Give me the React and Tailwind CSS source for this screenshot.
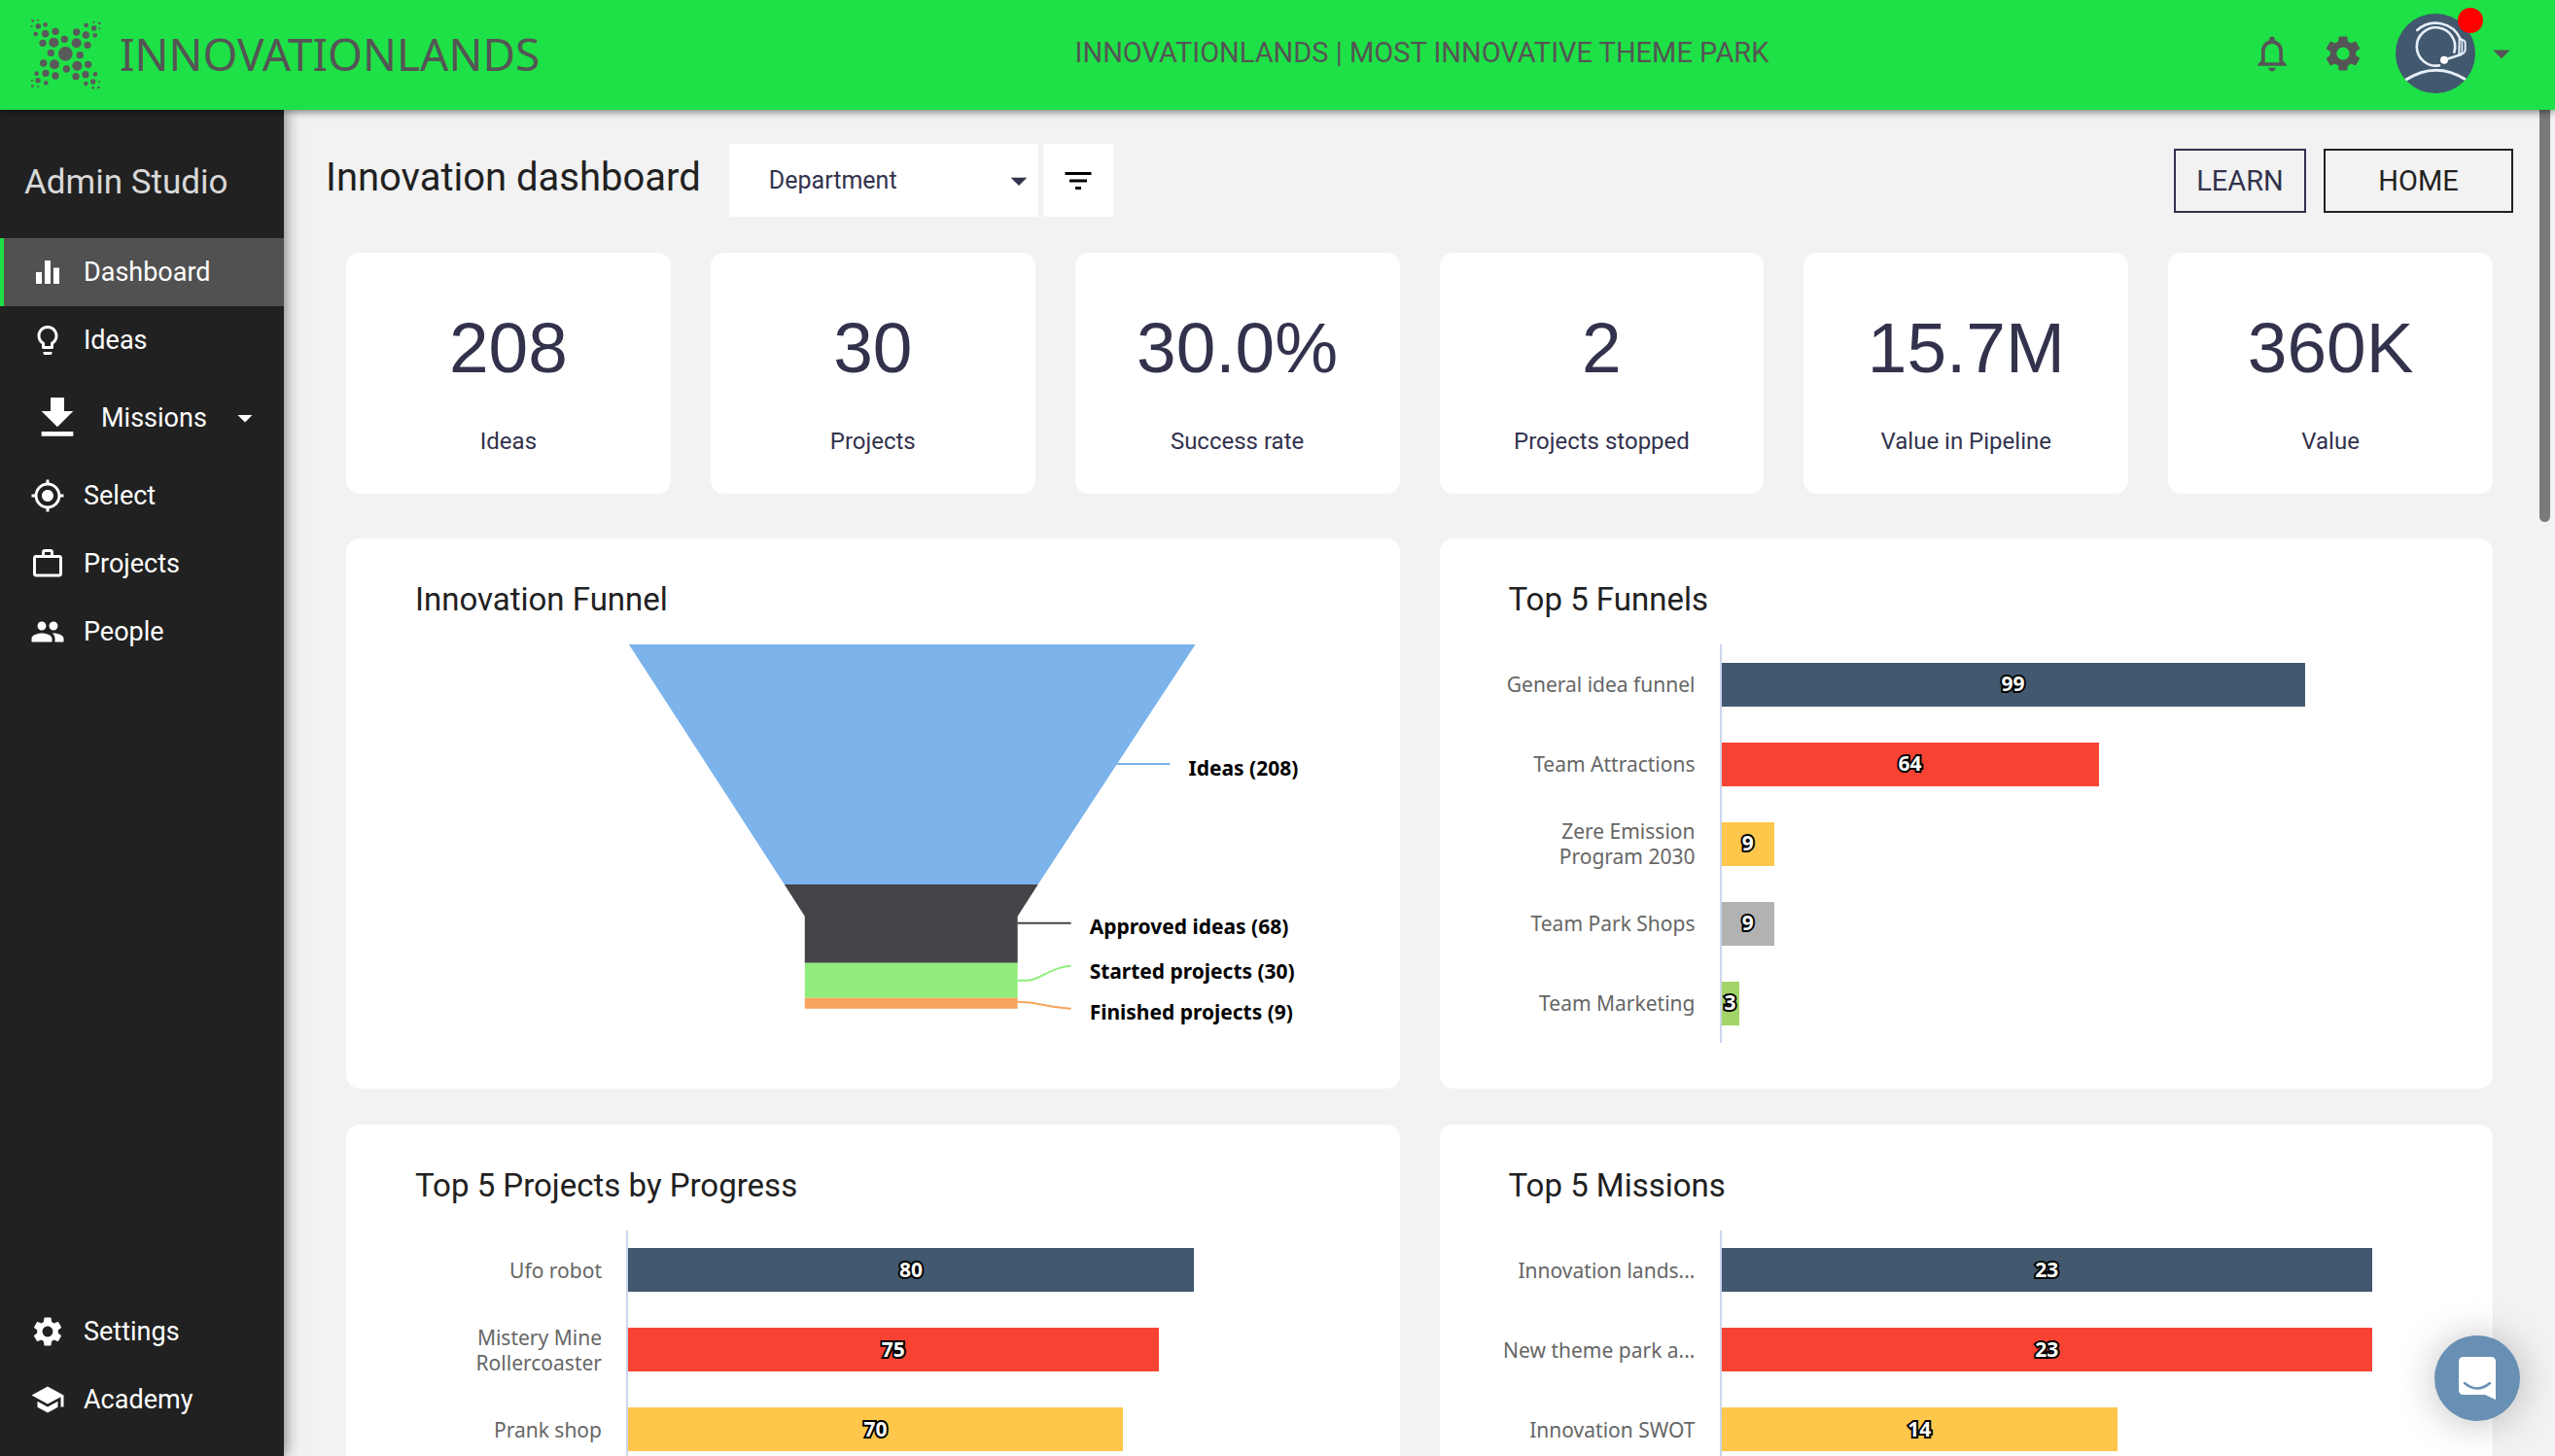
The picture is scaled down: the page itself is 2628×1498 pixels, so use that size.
import { useState } from "react";
import {
  MdArrowDropDown,
  MdEqualizer,
  MdFileDownload,
  MdFilterList,
  MdLightbulbOutline,
  MdMyLocation,
  MdNotificationsNone,
  MdPeople,
  MdSchool,
  MdSettings,
  MdWorkOutline,
} from "react-icons/md";

const mainLinks = [
  { label: "Dashboard", icon: MdEqualizer },
  { label: "Ideas", icon: MdLightbulbOutline },
  { label: "Missions", icon: MdFileDownload, expandable: true },
  { label: "Select", icon: MdMyLocation },
  { label: "Projects", icon: MdWorkOutline },
  { label: "People", icon: MdPeople },
];

const bottomLinks = [
  { label: "Settings", icon: MdSettings },
  { label: "Academy", icon: MdSchool },
];

const stats = [
  { value: "208", label: "Ideas" },
  { value: "30", label: "Projects" },
  { value: "30.0%", label: "Success rate" },
  { value: "2", label: "Projects stopped" },
  { value: "15.7M", label: "Value in Pipeline" },
  { value: "360K", label: "Value" },
];

const topFunnels = [
  { label: "General idea funnel", value: 99, color: "bg-[#41586f]" },
  { label: "Team Attractions", value: 64, color: "bg-[#f84333]" },
  { label: "Zere Emission Program 2030", value: 9, color: "bg-[#fec64a]" },
  { label: "Team Park Shops", value: 9, color: "bg-[#b2b2b2]" },
  { label: "Team Marketing", value: 3, color: "bg-[#a3d467]" },
];

const topProjects = [
  { label: "Ufo robot", value: 80, color: "bg-[#41586f]" },
  { label: "Mistery Mine Rollercoaster", value: 75, color: "bg-[#f84333]" },
  { label: "Prank shop", value: 70, color: "bg-[#fec64a]" },
];

const topMissions = [
  { label: "Innovation lands...", value: 23, color: "bg-[#41586f]" },
  { label: "New theme park a...", value: 23, color: "bg-[#f84333]" },
  { label: "Innovation SWOT", value: 14, color: "bg-[#fec64a]" },
];

// x, y, radius
const logoDots = [
  [142, 136, 22],
  [106, 101, 15], [176, 103, 15], [108, 169, 15], [178, 173, 15],
  [139, 91, 11], [97, 133, 11], [187, 140, 11], [145, 183, 11],
  [111, 67, 11], [176, 69, 11], [72, 103, 11], [210, 109, 11],
  [74, 165, 11], [212, 169, 11], [111, 204, 11], [174, 206, 11],
  [80, 74, 11], [205, 78, 11], [81, 196, 11], [204, 200, 11],
  [80, 46, 7], [50, 75, 7], [58, 51, 8], [206, 48, 7], [230, 57, 8], [233, 79, 7],
  [53, 197, 7], [57, 218, 8], [82, 226, 7], [234, 199, 7], [227, 222, 8], [205, 228, 7],
  [41, 34, 4], [57, 32, 3], [38, 52, 3], [229, 39, 3], [247, 42, 4], [247, 58, 3],
  [39, 218, 3], [40, 236, 4], [58, 237, 3], [246, 222, 3], [244, 240, 4], [227, 241, 4],
];

function Logo() {
  return (
    <svg viewBox="30 24 225 225" className="size-[75px] shrink-0 fill-[#5a5a5a]" aria-hidden="true">
      {logoDots.map(([x, y, r]) => (
        <circle key={`${x}-${y}`} cx={x} cy={y} r={r} />
      ))}
    </svg>
  );
}

function Avatar() {
  return (
    <svg viewBox="492 44 246 246" className="size-[82px]" aria-hidden="true">
      <circle cx="615" cy="167" r="123" fill="#41586f" />
      <g fill="none" stroke="#e6eef8" strokeWidth="8">
        <path d="M673 163 A59 59 0 1 0 627 204" strokeLinecap="round" />
        <path d="M559 95 A84 84 0 0 1 692 122" strokeLinecap="round" />
        <path d="M689 122 L702 126 L707 132 V158 L702 166 L688 170 Z" strokeWidth="6" strokeLinejoin="round" />
        <path d="M697 124 V166" strokeWidth="5" />
        <path d="M642 187 L697 169" />
        <path d="M523 249 Q615 189 708 247" strokeWidth="9" />
      </g>
      <circle cx="642" cy="187" r="12" fill="#fff" />
    </svg>
  );
}

function Header() {
  return (
    <header className="relative z-20 flex h-[113px] shrink-0 items-center bg-[#1de146] pb-[3px] pl-[30px] pr-[34px] text-[#555] shadow-[0_2px_8px_rgba(0,0,0,0.5)]">
      <a href="#" className="flex w-[580px] items-center gap-[18px]">
        <Logo />
        <span className="font-['Noto_Sans',sans-serif] text-[46px] leading-none">INNOVATIONLANDS</span>
      </a>
      <p className="flex-1 text-center text-[29px]">INNOVATIONLANDS | MOST INNOVATIVE THEME PARK</p>
      <div className="flex items-center">
        <button aria-label="Notifications" className="mr-[29px]">
          <MdNotificationsNone className="size-[44px]" />
        </button>
        <button aria-label="Settings" className="mr-8">
          <MdSettings className="size-[44px]" />
        </button>
        <button aria-label="Account" className="relative flex items-center gap-[6px]">
          <Avatar />
          <span className="absolute -top-1.5 left-[64px] size-[26px] rounded-full bg-[#ff0000]" />
          <MdArrowDropDown className="size-[42px]" />
        </button>
      </div>
    </header>
  );
}

function NavItem({ item, active, onSelect }) {
  const Icon = item.icon;
  return (
    <a
      href="#"
      onClick={onSelect}
      className={`flex items-center border-l-4 pl-[27px] text-[27px] ${
        active ? "border-[#1de146] bg-[#515151]" : "border-transparent"
      } ${item.expandable ? "h-[90px] gap-[17px]" : "h-[70px] gap-[19px]"}`}
    >
      <Icon className={item.expandable ? "size-[56px]" : "size-[36px]"} />
      <span>{item.label}</span>
      {item.expandable && <MdArrowDropDown className="ml-1 size-[36px]" />}
    </a>
  );
}

function Sidebar() {
  const [current, setCurrent] = useState("Dashboard");

  const renderLink = (item) => (
    <NavItem
      key={item.label}
      item={item}
      active={current === item.label}
      onSelect={() => setCurrent(item.label)}
    />
  );

  return (
    <aside className="relative z-10 flex w-[292px] shrink-0 flex-col bg-[#212121] pb-[23px] pt-[55px] text-white shadow-[0_0_16px_rgba(0,0,0,0.6)]">
      <h2 className="mb-[37px] pl-[25px] text-[35px] leading-10 text-[#d8d8d8]">Admin Studio</h2>
      <nav className="flex flex-1 flex-col">
        {mainLinks.map(renderLink)}
        <div className="mt-auto">{bottomLinks.map(renderLink)}</div>
      </nav>
    </aside>
  );
}

function Toolbar() {
  return (
    <div className="flex items-start px-[43px]">
      <h1 className="mr-[29px] text-[40px] leading-[70px] text-[#212121]">Innovation dashboard</h1>
      <div className="relative mr-[5px]">
        <select
          aria-label="Department"
          className="h-[75px] w-[318px] appearance-none bg-white pl-[41px] text-[25px] text-[#32324d]"
        >
          <option>Department</option>
        </select>
        <MdArrowDropDown className="pointer-events-none absolute right-0 top-[18px] size-[40px] text-[#32324d]" />
      </div>
      <button aria-label="Filter" className="flex h-[75px] w-[72px] items-center justify-center bg-white text-black">
        <MdFilterList className="size-[36px]" />
      </button>
      <div className="ml-auto mt-[5px] flex gap-[18px] text-[29px]">
        <button className="h-[66px] w-[136px] border-2 border-[#32324d] pt-0.5 text-[#32324d]">LEARN</button>
        <button className="h-[66px] w-[195px] border-2 border-[#212121] pt-0.5 text-[#212121]">HOME</button>
      </div>
    </div>
  );
}

function StatCard({ value, label }) {
  return (
    <div className="flex h-[248px] flex-col items-center rounded-[14px] bg-white pt-[58px] text-[#32324d]">
      <p className="font-['Liberation_Sans',sans-serif] text-[73px] leading-[80px]">{value}</p>
      <p className="mt-10 text-[24px] leading-8">{label}</p>
    </div>
  );
}

function Card({ title, children }) {
  return (
    <section className="rounded-[14px] bg-white pb-[46px] pt-[43px]">
      <h3 className="pl-[71px] text-[33px] leading-10 text-[#212121]">{title}</h3>
      {children}
    </section>
  );
}

function BarChart({ data, max }) {
  return (
    <div className="mt-[26px] pr-[66px] font-['Noto_Sans',sans-serif]">
      {data.map((row) => (
        <div key={row.label} className="flex h-[82px] items-center">
          <div className="flex w-[288px] justify-end pr-[25px]">
            <span className="max-w-[200px] text-right text-[21px] leading-[26px] text-[#666]">{row.label}</span>
          </div>
          <div className="flex h-full flex-1 items-center border-l-2 border-[#ccd6eb]">
            <div
              className={`flex h-[45px] items-center justify-center text-[21px] font-bold text-white ${row.color}`}
              style={{ width: `${(row.value / max) * 100}%` }}
            >
              <span className="[-webkit-text-stroke:4px_#000] [paint-order:stroke_fill]">{row.value}</span>
            </div>
          </div>
        </div>
      ))}
    </div>
  );
}

function FunnelChart() {
  return (
    <svg viewBox="0 0 1084 411" className="mt-[26px] w-full" role="img" aria-label="Innovation Funnel">
      <path d="M291 0 H874 L712 247 H451 Z" fill="#7bb3ea" />
      <path d="M451 247 H712 L691 280 V328 H472 V280 Z" fill="#434348" />
      <path d="M472 328 H691 V364 H472 Z" fill="#90ed7d" />
      <path d="M472 364 H691 V375 H472 Z" fill="#f7a35c" />
      <g fill="none" strokeWidth="2">
        <path d="M793 123 H848" stroke="#7bb3ea" />
        <path d="M691 287 H746" stroke="#434348" />
        <path d="M691 346 C706 346 706 346 720 339 S738 332 746 331" stroke="#90ed7d" />
        <path d="M691 368 C706 368 712 370 722 372 S738 374 746 375" stroke="#f7a35c" />
      </g>
      <g className="fill-black font-['Noto_Sans',sans-serif] text-[21px] font-bold">
        <text x="867" y="135">Ideas (208)</text>
        <text x="765" y="298">Approved ideas (68)</text>
        <text x="765" y="344">Started projects (30)</text>
        <text x="765" y="386">Finished projects (9)</text>
      </g>
    </svg>
  );
}

function ChatButton() {
  return (
    <button
      aria-label="Open chat"
      className="absolute bottom-9 right-9 z-20 flex size-[88px] items-center justify-center rounded-full bg-[#6890b4] shadow-[0_2px_40px_rgba(0,0,0,0.25)]"
    >
      <svg viewBox="0 0 38 44" className="h-[44px] w-[38px]" aria-hidden="true">
        <path d="M5 0 H33 Q38 0 38 5 V44 L27 39 H5 Q0 39 0 34 V5 Q0 0 5 0 Z" fill="#fff" />
        <path d="M6 27 Q19 38 32 27" fill="none" stroke="#6890b4" strokeWidth="2.5" strokeLinecap="round" />
      </svg>
    </button>
  );
}

export default function App() {
  return (
    <div className="relative flex h-screen flex-col overflow-hidden bg-[#f2f2f2] font-[Roboto,sans-serif]">
      <Header />
      <div className="flex min-h-0 flex-1">
        <Sidebar />
        <main className="relative min-w-0 flex-1 overflow-hidden pt-[35px]">
          <Toolbar />
          <div className="px-16">
            <div className="mt-[37px] grid grid-cols-6 gap-[41px]">
              {stats.map((s) => (
                <StatCard key={s.label} value={s.value} label={s.label} />
              ))}
            </div>
            <div className="mt-[46px] grid grid-cols-2 gap-x-[41px] gap-y-[37px]">
              <Card title="Innovation Funnel">
                <FunnelChart />
              </Card>
              <Card title="Top 5 Funnels">
                <BarChart data={topFunnels} max={120} />
              </Card>
              <Card title="Top 5 Projects by Progress">
                <BarChart data={topProjects} max={100} />
              </Card>
              <Card title="Top 5 Missions">
                <BarChart data={topMissions} max={25} />
              </Card>
            </div>
          </div>
          {/* scroll thumb */}
          <div className="absolute right-[5px] top-0 h-[424px] w-[11px] rounded-b-full bg-[#7a7a7a]" />
        </main>
      </div>
      <ChatButton />
    </div>
  );
}
